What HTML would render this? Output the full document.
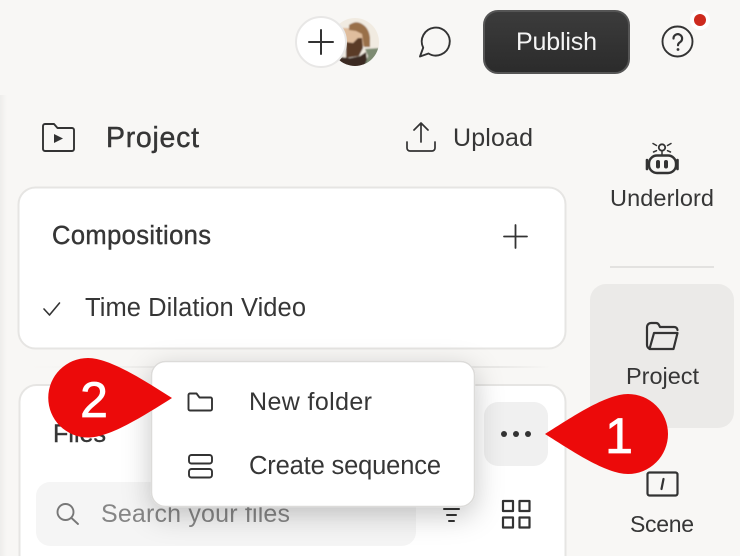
<!DOCTYPE html>
<html><head><meta charset="utf-8"><style>
html,body{margin:0;padding:0;background:#f8f7f5;width:740px;height:556px;overflow:hidden}
svg{display:block}
text{font-family:"Liberation Sans",sans-serif;font-size:25px;fill:#363636}
.m{stroke:#333;stroke-width:.4px}
.i{fill:none;stroke:#333;stroke-width:1.9;stroke-linecap:round;stroke-linejoin:round}
</style></head><body>
<svg width="740" height="556" viewBox="0 0 740 556" xmlns="http://www.w3.org/2000/svg">
<defs>
<linearGradient id="pub" x1="0" y1="0" x2="0" y2="1"><stop offset="0" stop-color="#3c3c3c"/><stop offset="1" stop-color="#2b2b2b"/></linearGradient>
<linearGradient id="side" x1="0" y1="0" x2="1" y2="0"><stop offset="0" stop-color="#eeedeb"/><stop offset="1" stop-color="#f8f7f5"/></linearGradient>
<linearGradient id="sep" x1="0" y1="0" x2="1" y2="0"><stop offset="0" stop-color="#eeedeb" stop-opacity="0"/><stop offset=".3" stop-color="#e9e8e6"/><stop offset=".9" stop-color="#e9e8e6"/><stop offset="1" stop-color="#e9e8e6" stop-opacity="0"/></linearGradient>
<filter id="sh" x="-20%" y="-30%" width="140%" height="170%"><feDropShadow dx="0" dy="8" stdDeviation="14" flood-color="#000" flood-opacity=".22"/></filter>
<filter id="bl"><feGaussianBlur stdDeviation=".8"/></filter>
<clipPath id="av"><circle cx="355" cy="42" r="24"/></clipPath>
<clipPath id="pg"><rect width="740" height="556"/></clipPath>
</defs>

<rect x="0" y="95" width="7" height="461" fill="url(#side)"/>

<!-- top bar -->
<g clip-path="url(#av)"><g filter="url(#bl)">
<rect x="328" y="16" width="54" height="52" fill="#f1ebe1"/>
<path d="M342 28H362L364 46L346 48z" fill="#dfbd9d"/>
<path d="M349 25Q356 20 362 24Q369 28 370 38L370 47L364 47L362 34L356 31L349 30z" fill="#99704a"/>
<path d="M346 42L353 43L358 38L362 38L363 48L359 56L346 58z" fill="#5a3a25"/>
<path d="M336 68L340 57L350 58L360 56L366 52L368 68z" fill="#3a2a20"/>
<path d="M365 49L380 48V68H364L368 56z" fill="#7d8b72"/>
</g></g>
<circle cx="321" cy="42" r="25" fill="#fff" stroke="#e8e7e6" stroke-width="2"/>
<path d="M321 30v24M309 42h24" class="i" stroke-linecap="butt" style="stroke-width:2"/>

<path d="M420 56.500l3.200-8.800a14 14 0 1 1 5.300 5.800z" class="i"/>

<rect x="484" y="11" width="145" height="62" rx="14" fill="url(#pub)" stroke="#555" stroke-width="2"/>
<text x="516" y="50" textLength="81" lengthAdjust="spacing" style="fill:#f4f4f4">Publish</text>

<circle cx="677.500" cy="41.500" r="15" class="i"/>
<path d="M673.500 38.500a4.300 4.300 0 1 1 6.800 3.500c-1.600 1-2.300 1.800-2.300 3.200" class="i" style="stroke-width:2.200"/>
<circle cx="678" cy="49.500" r="1.400" fill="#333"/>
<circle cx="700" cy="20" r="10" fill="#fff"/>
<circle cx="700" cy="20" r="6" fill="#cd2a1e"/>

<!-- project header -->
<path d="M43 126a2 2 0 0 1 2-2h9l3.500 4h14.500a2 2 0 0 1 2 2V149a2 2 0 0 1-2 2H45a2 2 0 0 1-2-2z" class="i"/>
<path d="M54 134l9 4.500-9 4.500z" fill="#333"/>
<text x="106" y="147" style="font-size:28.500px" class="m" textLength="93" lengthAdjust="spacing">Project</text>
<path d="M407 142v6a3 3 0 0 0 3 3h22a3 3 0 0 0 3-3v-6M421 142v-18M414 130l7-7 7 7" class="i" style="stroke-width:1.700"/>
<text x="453" y="146" textLength="80" lengthAdjust="spacing">Upload</text>

<!-- compositions card -->
<rect x="18.500" y="187.500" width="547" height="161" rx="17" fill="#fff" stroke="#e6e5e3" stroke-width="2"/>
<text x="52" y="244" class="m" style="font-size:25.500px" textLength="159" lengthAdjust="spacing">Compositions</text>
<path d="M515.500 225v23M504 236.500h23" class="i" stroke-linecap="butt" style="stroke-width:1.800"/>
<path d="M44 309l5.500 6 10-12" class="i" style="stroke-width:1.600"/>
<text x="85" y="316" style="font-size:25.500px" textLength="221" lengthAdjust="spacing">Time Dilation Video</text>

<rect x="30" y="366" width="520" height="2" fill="url(#sep)"/>

<!-- files card -->
<path d="M19.500 558V402a17 17 0 0 1 17-17h512a17 17 0 0 1 17 17v156z" fill="#fff" stroke="#e6e5e3" stroke-width="2" clip-path="url(#pg)"/>
<text x="53" y="442" class="m" textLength="53" lengthAdjust="spacing">Files</text>
<rect x="484" y="402" width="64" height="64" rx="14" fill="#f0f0f0"/>
<circle cx="504" cy="434" r="3" fill="#333"/><circle cx="516" cy="434" r="3" fill="#333"/><circle cx="528" cy="434" r="3" fill="#333"/>
<rect x="36" y="482" width="380" height="64" rx="14" fill="#f5f5f5"/>
<circle cx="65.500" cy="512" r="8" class="i" style="stroke:#777"/>
<path d="M71.500 518l6.500 6" class="i" style="stroke:#777"/>
<text x="101" y="522" style="fill:#868686" textLength="189" lengthAdjust="spacing">Search your files</text>
<path d="M444 509h15M447 515h9M449 521h5" class="i" stroke-linecap="butt" style="stroke-width:2"/>
<path d="M503 501h10v10h-10zM519.500 501h10v10h-10zM503 517.500h10v10h-10zM519.500 517.500h10v10h-10z" class="i" stroke-linecap="butt" stroke-linejoin="miter" style="stroke-width:2.200"/>

<!-- right rail -->
<circle cx="662" cy="147.500" r="3.200" class="i" style="stroke-width:1.800"/>
<path d="M662 151v4M653 143.500l3.500 2M671 143.500l-3.500 2M653.500 152l3-1.300M670.500 152l-3-1.300" class="i" style="stroke-width:1.500"/>
<rect x="649" y="155.500" width="27" height="17.500" rx="8" class="i" style="stroke-width:2.400"/>
<path d="M647 160v9M677.500 160v9" class="i" style="stroke-width:2.600"/>
<rect x="656" y="160" width="4" height="8.500" rx="2" fill="#333"/>
<rect x="664" y="160" width="4" height="8.500" rx="2" fill="#333"/>
<text x="610" y="206" style="font-size:23.500px" textLength="104" lengthAdjust="spacing">Underlord</text>
<rect x="610" y="266" width="104" height="2" fill="#e3e2e0"/>
<rect x="590" y="284" width="144" height="144" rx="16" fill="#ebeae8"/>
<path d="M652 349h-1a4 4 0 0 1-4-4v-18a4 4 0 0 1 4-4h5q2 0 3 2l1 2h14q3 0 3.500 3M649.500 349l4.500-16h23.500l-4 16z" class="i" style="stroke-width:2.200"/>
<text x="626" y="384" style="font-size:23.500px" textLength="73" lengthAdjust="spacing">Project</text>
<rect x="647.500" y="472.500" width="30" height="23" rx="2" class="i" style="stroke-width:2.200"/>
<path d="M663.500 479l-2 10" class="i" style="stroke-width:2.200"/>
<text x="630" y="532" style="font-size:23px" textLength="64" lengthAdjust="spacing">Scene</text>

<!-- menu -->
<rect x="151.500" y="361.500" width="323" height="145" rx="14" fill="#fff" stroke="#dcdbd9" stroke-width="1.500" filter="url(#sh)"/>
<path d="M188.500 395a1.500 1.500 0 0 1 1.500-1.500h6.500l3 4h11a1.500 1.500 0 0 1 1.500 1.500v10a1.500 1.500 0 0 1-1.500 1.500H190a1.500 1.500 0 0 1-1.500-1.500z" class="i"/>
<text x="249" y="410" textLength="123" lengthAdjust="spacing">New folder</text>
<rect x="189" y="455" width="23" height="8.500" rx="2.500" class="i"/>
<rect x="189" y="469" width="23" height="8.500" rx="2.500" class="i"/>
<text x="249" y="474" style="font-size:25.500px" textLength="192" lengthAdjust="spacing">Create sequence</text>

<!-- callouts -->
<path d="M172 398C145 415 110 437.500 88 437.500a39.750 39.750 0 0 1 0-79.500C110 358 145 381 172 398z" fill="#ec0a0a"/>
<text x="94" y="417" text-anchor="middle" style="font-size:50px;fill:#fff;stroke:#fff;stroke-width:.8px">2</text>
<path d="M545 434C572 417 606 394 628 394a40 40 0 0 1 0 80C606 474 572 451 545 434z" fill="#ec0a0a"/>
<text x="619" y="453" text-anchor="middle" style="font-size:50px;fill:#fff;stroke:#fff;stroke-width:.8px">1</text>
</svg>
</body></html>
